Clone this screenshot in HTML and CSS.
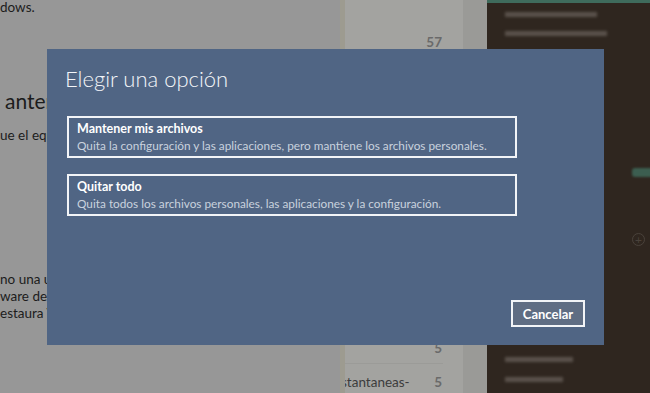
FILE: index.html
```html
<!DOCTYPE html>
<html lang="es">
<head>
    <meta charset="UTF-8">
    <title>Elegir una opción</title>
    <link rel="stylesheet" href="styles.css">
</head>
<body>
<div class="page">
    <div class="article">
        <p class="line top">dows.</p>
        <h2 class="heading">anter</h2>
        <p class="line small">ue el equ</p>
        <p class="line para">no una u</p>
        <p class="line">ware del</p>
        <p class="line">estaura V</p>
    </div>
    <div class="list">
        <div class="count first">57</div>
        <div class="count second">5</div>
        <div class="list-item">
            <span>stantaneas-</span>
            <span class="count">5</span>
        </div>
    </div>
    <div class="gutter"></div>
    <div class="sidebar">
        <div class="sidebar-bar"></div>
        <div class="blur-line w1"></div>
        <div class="blur-line w2"></div>
        <div class="sidebar-pill"></div>
        <div class="sidebar-plus">+</div>
        <div class="blur-line w4"></div>
        <div class="blur-line w5"></div>
    </div>
</div>

<div class="dialog">
    <h1>Elegir una opción</h1>
    <div class="option">
        <div class="option-title">Mantener mis archivos</div>
        <div class="option-desc">Quita la configuración y las aplicaciones, pero mantiene los archivos personales.</div>
    </div>
    <div class="option">
        <div class="option-title">Quitar todo</div>
        <div class="option-desc">Quita todos los archivos personales, las aplicaciones y la configuración.</div>
    </div>
    <div class="dialog-footer">
        <button class="btn">Cancelar</button>
    </div>
</div>
</body>
</html>
```

FILE: styles.css
```css
* {
    box-sizing: border-box;
}

body {
    margin: 0;
    width: 650px;
    height: 393px;
    overflow: hidden;
    font-family: 'Lato', 'Open Sans', sans-serif;
    background-color: #979797;
    position: relative;
}

.page {
    display: flex;
    height: 393px;
    overflow: hidden;
}

.article {
    flex: none;
    width: 340px;
    overflow: hidden;
    color: #1c1c1c;
    font-size: 13.5px;
}

.line {
    margin: 0;
    white-space: nowrap;
    line-height: 17px;
}

.line.top {
    line-height: 14px;
}

.heading {
    margin: 73px 0 0 5px;
    font-weight: 400;
    font-size: 21px;
    line-height: 28px;
    white-space: nowrap;
}

.line.small {
    margin-top: 12px;
}

.article .line.para {
    margin-top: 127px;
}

.list {
    flex: none;
    width: 123px;
    height: 393px;
    overflow: hidden;
    background-color: #a3a3a0;
    border-left: 5px solid #9d9b90;
    font-size: 13.5px;
    color: #5e5e5e;
}

.count {
    font-weight: 700;
    text-align: right;
    padding-right: 21px;
    color: #6a6a6a;
    line-height: 17px;
}

.count.first {
    margin-top: 34px;
}

.count.second {
    margin-top: 289px;
}

.list-item {
    display: flex;
    justify-content: space-between;
    border-top: 1px solid #9b9b98;
    margin: 6px 20px 0 -4px;
    padding-top: 10px;
    color: #3c3c3c;
    line-height: 17px;
}

.list-item .count {
    padding-right: 1px;
}

.gutter {
    flex: none;
    width: 24px;
    background-color: #9a9a97;
}

.sidebar {
    flex: 1;
    background-color: #2f261f;
    padding-left: 18px;
    overflow: hidden;
}

.sidebar-bar {
    height: 3px;
    margin-left: -18px;
    background-color: #3f6b5c;
}

.blur-line {
    height: 5px;
    background-color: #5a524c;
    filter: blur(1.5px);
}

.w1 { width: 92px; margin-top: 9px; }
.w2 { width: 102px; margin-top: 14px; }
.w4 { width: 68px; margin-top: 111px; }
.w5 { width: 58px; margin-top: 15px; }

.sidebar-pill {
    width: 30px;
    height: 9px;
    margin: 132px 0 0 127px;
    background-color: #3c5e50;
    border-radius: 3px;
    filter: blur(1px);
}

.sidebar-plus {
    width: 13px;
    height: 13px;
    margin: 56px 0 0 127px;
    border: 1px solid #4a423b;
    border-radius: 50%;
    color: #4a423b;
    font-size: 12px;
    line-height: 11px;
    text-align: center;
}

.dialog {
    position: absolute;
    left: 47px;
    top: 49px;
    width: 557px;
    height: 296px;
    background-color: #506584;
    padding: 15px 87px 0 18px;
    color: #fff;
}

.dialog h1 {
    margin: 0 0 22px 0;
    font-weight: 300;
    font-size: 22px;
    line-height: 30px;
    color: #f4f6f9;
}

.option {
    margin-left: 2px;
    height: 42px;
    border: 2px solid #f2f4f7;
    padding: 2px 8px 0 8px;
    margin-bottom: 16px;
}

.option-title {
    font-weight: 700;
    font-size: 12.5px;
    line-height: 17px;
    color: #ffffff;
}

.option-desc {
    font-size: 11.8px;
    line-height: 17px;
    color: #c9d2de;
    white-space: nowrap;
}

.dialog-footer {
    display: flex;
    justify-content: flex-end;
    margin-top: 84px;
    margin-right: -68px;
}

.btn {
    width: 74px;
    height: 27px;
    background-color: #5f6d83;
    border: 2px solid #f2f4f7;
    color: #fff;
    font-family: inherit;
    font-weight: 700;
    font-size: 13px;
    padding: 0;
}
```
